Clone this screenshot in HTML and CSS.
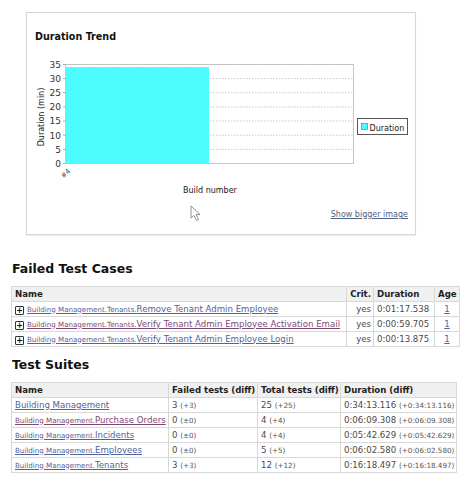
FILE: index.html
```html
<!DOCTYPE html>
<html>
<head>
<meta charset="utf-8">
<link rel="stylesheet" href="styles.css">
</head>
<body>
<div class="card">
  <h3 class="card-title">Duration Trend</h3>
  <svg class="chart" width="388" height="150" viewBox="0 0 388 150">
    <rect x="38.5" y="14.5" width="288" height="99" fill="#fff" stroke="#c8c8c8"/>
    <g stroke="#bbb" stroke-dasharray="1.5 1.5" stroke-width="0.8">
      <line x1="39" y1="14.5" x2="326" y2="14.5"/>
      <line x1="39" y1="28.6" x2="326" y2="28.6"/>
      <line x1="39" y1="42.7" x2="326" y2="42.7"/>
      <line x1="39" y1="56.9" x2="326" y2="56.9"/>
      <line x1="39" y1="71" x2="326" y2="71"/>
      <line x1="39" y1="85.2" x2="326" y2="85.2"/>
      <line x1="39" y1="99.4" x2="326" y2="99.4"/>
    </g>
    <rect x="39" y="17" width="143" height="96.5" fill="#4dfcfc"/>
    <g stroke="#999" stroke-width="0.8">
      <line x1="36" y1="14.5" x2="38.5" y2="14.5"/>
      <line x1="36" y1="28.6" x2="38.5" y2="28.6"/>
      <line x1="36" y1="42.7" x2="38.5" y2="42.7"/>
      <line x1="36" y1="56.9" x2="38.5" y2="56.9"/>
      <line x1="36" y1="71" x2="38.5" y2="71"/>
      <line x1="36" y1="85.2" x2="38.5" y2="85.2"/>
      <line x1="36" y1="99.4" x2="38.5" y2="99.4"/>
      <line x1="36" y1="113.5" x2="38.5" y2="113.5"/>
    </g>
    <g class="tick" text-anchor="end">
      <text x="34" y="17.8">35</text>
      <text x="34" y="31.9">30</text>
      <text x="34" y="46">25</text>
      <text x="34" y="60.2">20</text>
      <text x="34" y="74.3">15</text>
      <text x="34" y="88.5">10</text>
      <text x="34" y="102.7">5</text>
      <text x="34" y="116.8">0</text>
    </g>
    <text class="axis" transform="translate(17 67) rotate(-90)" text-anchor="middle">Duration (min)</text>
    <text class="cat" transform="translate(44 121.5) rotate(-45)" text-anchor="end">#4</text>
    <text class="axis" x="183" y="143" text-anchor="middle">Build number</text>
    <rect x="330.5" y="68.5" width="50" height="16" fill="#fff" stroke="#555"/>
    <rect x="334.5" y="73.5" width="6" height="6" fill="#4dfcfc" stroke="#666" stroke-width="0.6"/>
    <text class="legend" x="342.5" y="80.5">Duration</text>
  </svg>
  <div class="card-foot"><a class="bigger" href="#">Show bigger image</a></div>
</div>

<h2 class="section">Failed Test Cases</h2>
<table class="grid failed">
  <colgroup>
    <col class="w-name"><col class="w-crit"><col class="w-dur"><col class="w-age">
  </colgroup>
  <thead>
    <tr><th>Name</th><th class="c-crit">Crit.</th><th>Duration</th><th class="c-age">Age</th></tr>
  </thead>
  <tbody>
    <tr>
      <td><span class="plus">+</span><a href="#"><span class="pre">Building Management.Tenants.</span>Remove Tenant Admin Employee</a></td>
      <td class="c-crit">yes</td><td>0:01:17.538</td><td class="c-age"><a href="#">1</a></td>
    </tr>
    <tr>
      <td><span class="plus">+</span><a class="visited" href="#"><span class="pre">Building Management.Tenants.</span>Verify Tenant Admin Employee Activation Email</a></td>
      <td class="c-crit">yes</td><td>0:00:59.705</td><td class="c-age"><a href="#">1</a></td>
    </tr>
    <tr>
      <td><span class="plus">+</span><a href="#"><span class="pre">Building Management.Tenants.</span>Verify Tenant Admin Employee Login</a></td>
      <td class="c-crit">yes</td><td>0:00:13.875</td><td class="c-age"><a href="#">1</a></td>
    </tr>
  </tbody>
</table>

<h2 class="section">Test Suites</h2>
<table class="grid suites">
  <colgroup>
    <col class="s-name"><col class="s-failed"><col class="s-total"><col class="s-dur">
  </colgroup>
  <thead>
    <tr><th>Name</th><th>Failed tests (diff)</th><th>Total tests (diff)</th><th>Duration (diff)</th></tr>
  </thead>
  <tbody>
    <tr><td><a href="#">Building Management</a></td><td>3 <span class="diff">(+3)</span></td><td>25 <span class="diff">(+25)</span></td><td>0:34:13.116 <span class="diff">(+0:34:13.116)</span></td></tr>
    <tr><td><a class="visited" href="#"><span class="pre">Building Management.</span>Purchase Orders</a></td><td>0 <span class="diff">(±0)</span></td><td>4 <span class="diff">(+4)</span></td><td>0:06:09.308 <span class="diff">(+0:06:09.308)</span></td></tr>
    <tr><td><a href="#"><span class="pre">Building Management.</span>Incidents</a></td><td>0 <span class="diff">(±0)</span></td><td>4 <span class="diff">(+4)</span></td><td>0:05:42.629 <span class="diff">(+0:05:42.629)</span></td></tr>
    <tr><td><a href="#"><span class="pre">Building Management.</span>Employees</a></td><td>0 <span class="diff">(±0)</span></td><td>5 <span class="diff">(+5)</span></td><td>0:06:02.580 <span class="diff">(+0:06:02.580)</span></td></tr>
    <tr><td><a href="#"><span class="pre">Building Management.</span>Tenants</a></td><td>3 <span class="diff">(+3)</span></td><td>12 <span class="diff">(+12)</span></td><td>0:16:18.497 <span class="diff">(+0:16:18.497)</span></td></tr>
  </tbody>
</table>

<svg class="cursor" width="12" height="17" viewBox="0 0 12 17">
  <path d="M1 1 L1 13 L4 10.5 L6.5 15.5 L8.5 14.5 L6 9.5 L10 9.5 Z" fill="#fff" stroke="#777" stroke-width="0.8"/>
</svg>
</body>
</html>
```

FILE: styles.css
```css
html, body {
  margin: 0;
  padding: 0;
  background: #fff;
}
body {
  font-family: "DejaVu Sans", Verdana, sans-serif;
  color: #222;
  width: 474px;
  height: 481px;
  overflow: hidden;
  position: relative;
}
.card {
  margin: 12px 0 0 26px;
  width: 388px;
  height: 221px;
  border: 1px solid #d6d6d6;
  box-shadow: 0 1px 1px #eee;
}
.card-title {
  margin: 0;
  padding: 17px 0 0 8px;
  font-size: 9.6px;
  line-height: 13px;
  font-weight: bold;
  color: #111;
}
.chart {
  display: block;
  margin-top: 7px;
}
.chart text {
  font-family: "DejaVu Sans", sans-serif;
  fill: #333;
}
.chart .tick { font-size: 9px; }
.chart .axis { font-size: 8px; fill: #222; }
.chart .cat { font-size: 7px; fill: #555; }
.chart .legend { font-size: 8px; fill: #222; }
.card-foot {
  margin-top: 9px;
  padding-right: 7px;
  text-align: right;
  font-size: 8px;
  line-height: 12px;
}
.bigger {
  color: #52617f;
  text-decoration: underline;
}
.section {
  margin: 26px 0 9px 12px;
  font-size: 12.5px;
  line-height: 16px;
  font-weight: bold;
  color: #111;
}
.grid + .section {
  margin-top: 10px;
}
.grid {
  margin-left: 11px;
  border-collapse: collapse;
  table-layout: fixed;
  border: 1px solid #cfcfcf;
  font-size: 8.6px;
  color: #4a4a4a;
}
.grid th, .grid td {
  border: 1px solid #d8d8d8;
  height: 14px;
  padding: 0 3px;
  white-space: nowrap;
  overflow: hidden;
  line-height: 13px;
}
.grid th {
  background: #f0f0f0;
  color: #222;
  font-weight: bold;
  text-align: left;
}
.grid a {
  color: #50639a;
  text-decoration: underline;
}
.grid a.visited {
  color: #7a4a74;
}
.pre {
  font-size: 7.1px;
}
.diff {
  font-size: 7.2px;
  color: #555;
}
.failed { width: 448px; }
.w-name { width: 335px; }
.w-crit { width: 27px; }
.w-dur { width: 61px; }
.w-age { width: 25px; }
.failed .c-crit { text-align: right; padding: 0 2px; }
.failed .c-age { text-align: center; }
.failed th.c-age { text-align: right; }
.plus {
  display: inline-block;
  width: 7px;
  height: 7px;
  border: 1px solid #333;
  border-radius: 1px;
  font-size: 8px;
  line-height: 7px;
  text-align: center;
  font-weight: bold;
  color: #111;
  margin-right: 3px;
  vertical-align: -1px;
}
.suites { width: 445px; }
.s-name { width: 157px; }
.s-failed { width: 89px; }
.s-total { width: 83px; }
.s-dur { width: 116px; }
.cursor {
  position: absolute;
  left: 190px;
  top: 205px;
}
```
